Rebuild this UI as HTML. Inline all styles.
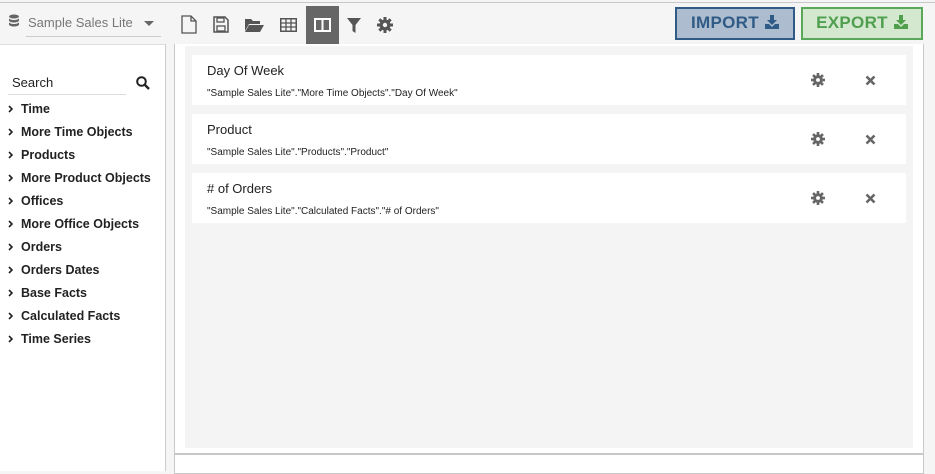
<!DOCTYPE html>
<html><head><style>
*{margin:0;padding:0;box-sizing:border-box}
body{width:935px;height:471px;background:#f5f5f5;font-family:"Liberation Sans",sans-serif;position:relative;overflow:hidden;color:#222}
.top{position:absolute;left:0;top:2px;width:935px;height:42px;border-top:1px solid #c8c8c8;background:#f5f5f5}
.ds{position:absolute;left:28px;top:12px;font-size:13px;color:#777}
.dsline{position:absolute;left:26px;top:33px;width:135px;border-top:1px solid #ccc}
.ico{position:absolute;top:13px}
.active{position:absolute;left:306px;top:3px;width:33px;height:41px;background:#666}
.btn{position:absolute;top:7px;height:33px;border:2px solid;font-weight:bold;font-size:17px;text-align:center;line-height:28px;letter-spacing:0.3px}
.btn svg{vertical-align:-1px;margin-left:6px}
.left{position:absolute;left:0;top:44px;width:166px;height:427px;background:#fff;border-right:1px solid #ccc;border-top:1px solid #ddd}
.search{position:absolute;left:12px;top:30px;font-size:13px;color:#222}
.sline{position:absolute;left:8px;top:49px;width:118px;border-top:1px solid #ddd}
.tree{position:absolute;left:8px;top:56px;font-size:12.5px;font-weight:bold}
.tree div{height:23px;line-height:16px}
.tree svg{margin-right:8px;vertical-align:0px}
.main{position:absolute;left:174px;top:44px;width:750px;height:410px;background:#fff;border:1px solid #c8c8c8;border-top:none}
.inner{position:absolute;left:10px;top:2px;width:728px;height:402px;background:#f4f4f4}
.card{position:absolute;left:7px;width:714px;height:50px;background:#fff}
.card .t{position:absolute;left:15px;top:8px;font-size:13px}
.card .p{position:absolute;left:15px;top:33px;font-size:10px}
.card .g{position:absolute;left:619px;top:18px}
.card .x{position:absolute;left:673px;top:20px}
.bot{position:absolute;left:174px;top:454px;width:750px;height:20px;background:#fff;border:1px solid #c8c8c8}
</style></head><body>
<div class="top">
<svg class="ico" style="left:8px;top:11px" width="12" height="14" viewBox="0 0 12 14"><ellipse cx="6" cy="2.5" rx="5" ry="2" fill="#666"/><path d="M1 4v2.5c0 1.1 2.2 2 5 2s5-.9 5-2V4c0 1.1-2.2 2-5 2S1 5.1 1 4zM1 8v2.5c0 1.1 2.2 2 5 2s5-.9 5-2V8c0 1.1-2.2 2-5 2S1 9.1 1 8z" fill="#666"/></svg>
<div class="ds">Sample Sales Lite</div>
<svg class="ico" style="left:144px;top:18px" width="10" height="6"><path d="M0 0h10L5 5z" fill="#666"/></svg>
<div class="dsline"></div>
<svg class="ico" style="left:181px;top:12px" width="16" height="19" viewBox="0 0 16 19"><path d="M1 1h9l5 5v12H1z M10 1v5h5" fill="none" stroke="#555" stroke-width="1.3"/></svg>
<svg class="ico" style="left:213px;top:13px" width="16" height="17" viewBox="0 0 16 17"><path d="M1 1h11l3 3v12H1z" fill="none" stroke="#555" stroke-width="1.5"/><rect x="4" y="2" width="7" height="4" fill="none" stroke="#555" stroke-width="1.3"/><rect x="4" y="10" width="8" height="5" fill="none" stroke="#555" stroke-width="1.3"/></svg>
<svg class="ico" style="left:245px;top:15px" width="19" height="14" viewBox="0 0 19 14"><path d="M0 1h6l2 2h7v3H4L0 13z M4 7h15l-4 7H0z" fill="#555"/></svg>
<svg class="ico" style="left:280px;top:15px" width="17" height="14" viewBox="0 0 17 14"><rect x="0.75" y="0.75" width="15.5" height="12.5" fill="none" stroke="#555" stroke-width="1.5"/><path d="M1 5h15M1 9h15M6 1v12M11 1v12" stroke="#555" stroke-width="1.3"/></svg>
<div class="active"></div>
<svg class="ico" style="left:314px;top:15px" width="17" height="14" viewBox="0 0 17 14"><rect x="1" y="1" width="15" height="12" fill="none" stroke="#fff" stroke-width="2"/><path d="M8.5 1v12" stroke="#fff" stroke-width="2"/></svg>
<svg class="ico" style="left:347px;top:15px" width="14" height="15" viewBox="0 0 14 15"><path d="M0 0h14L8.5 7v8L5.5 13V7z" fill="#555"/></svg>
<svg class="ico" style="left:377px;top:14px" width="16" height="16" viewBox="0 0 16 16"><g fill="#555"><circle cx="8" cy="8" r="5.5"/><rect x="6.5" y="0" width="3" height="16"/><rect x="0" y="6.5" width="16" height="3"/><rect x="6.5" y="0" width="3" height="16" transform="rotate(45 8 8)"/><rect x="6.5" y="0" width="3" height="16" transform="rotate(-45 8 8)"/></g><circle cx="8" cy="8" r="2.2" fill="#f5f5f5"/></svg>
</div>
<div class="btn" style="left:675px;width:120px;background:#adbdcf;border-color:#2f5b86;color:#2f5b86">IMPORT<svg width="14" height="14" viewBox="0 0 14 14"><path d="M5 0h4v5h3L7 10 2 5h3z" fill="#2f5b86"/><path d="M0 9h4l3 3 3-3h4v5H0z" fill="#2f5b86"/></svg></div>
<div class="btn" style="left:801px;width:122px;background:#d3e8cf;border-color:#5aa85a;color:#4f9f4f">EXPORT<svg width="14" height="14" viewBox="0 0 14 14"><path d="M5 0h4v5h3L7 10 2 5h3z" fill="#4f9f4f"/><path d="M0 9h4l3 3 3-3h4v5H0z" fill="#4f9f4f"/></svg></div>
<div class="left">
<div class="search">Search</div>
<svg style="position:absolute;left:136px;top:31px" width="14" height="14" viewBox="0 0 14 14"><circle cx="5.5" cy="5.5" r="4.3" fill="none" stroke="#222" stroke-width="2"/><path d="M8.5 8.5L13 13" stroke="#222" stroke-width="2.4"/></svg>
<div class="sline"></div>
<div class="tree">
<div><svg width="5" height="8"><path d="M1 1l3 3-3 3" fill="none" stroke="#222" stroke-width="1.6"/></svg>Time</div>
<div><svg width="5" height="8"><path d="M1 1l3 3-3 3" fill="none" stroke="#222" stroke-width="1.6"/></svg>More Time Objects</div>
<div><svg width="5" height="8"><path d="M1 1l3 3-3 3" fill="none" stroke="#222" stroke-width="1.6"/></svg>Products</div>
<div><svg width="5" height="8"><path d="M1 1l3 3-3 3" fill="none" stroke="#222" stroke-width="1.6"/></svg>More Product Objects</div>
<div><svg width="5" height="8"><path d="M1 1l3 3-3 3" fill="none" stroke="#222" stroke-width="1.6"/></svg>Offices</div>
<div><svg width="5" height="8"><path d="M1 1l3 3-3 3" fill="none" stroke="#222" stroke-width="1.6"/></svg>More Office Objects</div>
<div><svg width="5" height="8"><path d="M1 1l3 3-3 3" fill="none" stroke="#222" stroke-width="1.6"/></svg>Orders</div>
<div><svg width="5" height="8"><path d="M1 1l3 3-3 3" fill="none" stroke="#222" stroke-width="1.6"/></svg>Orders Dates</div>
<div><svg width="5" height="8"><path d="M1 1l3 3-3 3" fill="none" stroke="#222" stroke-width="1.6"/></svg>Base Facts</div>
<div><svg width="5" height="8"><path d="M1 1l3 3-3 3" fill="none" stroke="#222" stroke-width="1.6"/></svg>Calculated Facts</div>
<div><svg width="5" height="8"><path d="M1 1l3 3-3 3" fill="none" stroke="#222" stroke-width="1.6"/></svg>Time Series</div>
</div></div>
<div class="main"><div class="inner">
<div class="card" style="top:9px"><div class="t">Day Of Week</div><div class="p">"Sample Sales Lite"."More Time Objects"."Day Of Week"</div>
<svg class="g" width="14" height="14" viewBox="0 0 16 16"><g fill="#666"><circle cx="8" cy="8" r="5.5"/><rect x="6.5" y="0" width="3" height="16"/><rect x="0" y="6.5" width="16" height="3"/><rect x="6.5" y="0" width="3" height="16" transform="rotate(45 8 8)"/><rect x="6.5" y="0" width="3" height="16" transform="rotate(-45 8 8)"/></g><circle cx="8" cy="8" r="2.2" fill="#fff"/></svg>
<svg class="x" width="11" height="11"><path d="M1.5 1.5l8 8M9.5 1.5l-8 8" stroke="#666" stroke-width="2.6"/></svg></div>
<div class="card" style="top:68px"><div class="t">Product</div><div class="p">"Sample Sales Lite"."Products"."Product"</div>
<svg class="g" width="14" height="14" viewBox="0 0 16 16"><g fill="#666"><circle cx="8" cy="8" r="5.5"/><rect x="6.5" y="0" width="3" height="16"/><rect x="0" y="6.5" width="16" height="3"/><rect x="6.5" y="0" width="3" height="16" transform="rotate(45 8 8)"/><rect x="6.5" y="0" width="3" height="16" transform="rotate(-45 8 8)"/></g><circle cx="8" cy="8" r="2.2" fill="#fff"/></svg>
<svg class="x" width="11" height="11"><path d="M1.5 1.5l8 8M9.5 1.5l-8 8" stroke="#666" stroke-width="2.6"/></svg></div>
<div class="card" style="top:127px"><div class="t"># of Orders</div><div class="p">"Sample Sales Lite"."Calculated Facts"."# of Orders"</div>
<svg class="g" width="14" height="14" viewBox="0 0 16 16"><g fill="#666"><circle cx="8" cy="8" r="5.5"/><rect x="6.5" y="0" width="3" height="16"/><rect x="0" y="6.5" width="16" height="3"/><rect x="6.5" y="0" width="3" height="16" transform="rotate(45 8 8)"/><rect x="6.5" y="0" width="3" height="16" transform="rotate(-45 8 8)"/></g><circle cx="8" cy="8" r="2.2" fill="#fff"/></svg>
<svg class="x" width="11" height="11"><path d="M1.5 1.5l8 8M9.5 1.5l-8 8" stroke="#666" stroke-width="2.6"/></svg></div>
</div></div>
<div class="bot"></div>
</body></html>
